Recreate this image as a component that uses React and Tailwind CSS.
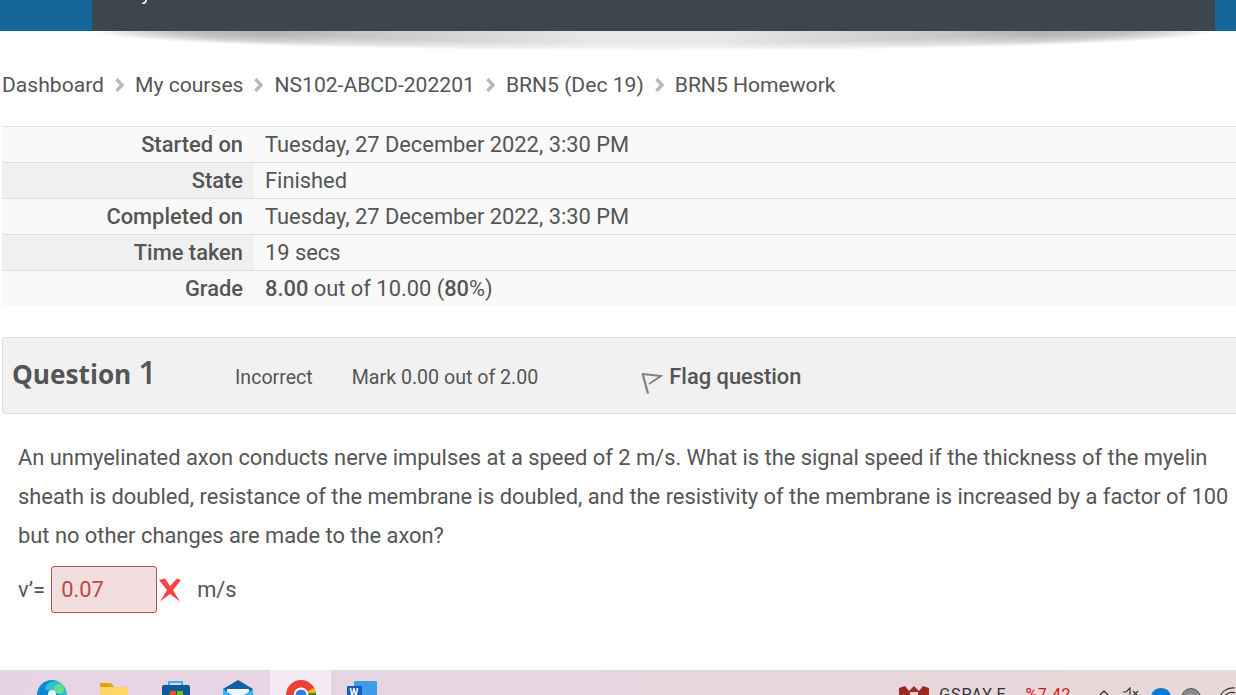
const rows = [
  ["Started on", "Tuesday, 27 December 2022, 3:30 PM"],
  ["State", "Finished"],
  ["Completed on", "Tuesday, 27 December 2022, 3:30 PM"],
  ["Time taken", "19 secs"],
];

function Chev() {
  return (
    <svg width="11" height="14" viewBox="0 0 11 14" className="mx-[10px] shrink-0" aria-hidden="true">
      <path d="M2.5 1 L8 7 L2.5 13" fill="none" stroke="#b9b9b9" strokeWidth="3.4" />
    </svg>
  );
}

function Row({ label, children, dark }) {
  return (
    <div className="flex h-[36px] border-t border-[#dedede] bg-[#f9f9f9] text-[#555555]">
      <div className={`w-[252px] shrink-0 pr-[11px] text-right font-medium leading-[35px] ${dark ? "bg-[#f0f0f0]" : ""}`}>{label}</div>
      <div className="pl-[11px] leading-[35px]">{children}</div>
    </div>
  );
}

function Taskbar() {
  return (
    <div className="relative flex h-[25px] items-start overflow-hidden bg-gradient-to-r from-[#e6d4e5] to-[#e8d8d8] pt-[11px]">
      <svg width="30" height="30" viewBox="0 0 30 30" className="ml-[37px] mt-[-1px] shrink-0">
        <circle cx="15" cy="15" r="15" fill="#2ec4c4" />
        <path d="M0 15a15 15 0 0 1 20-14c-8 0-12 4-12 9h14v8H0z" fill="#0f86d6" />
        <circle cx="22" cy="9" r="5" fill="#5fe08a" />
        <circle cx="15" cy="14" r="4" fill="#e6f4fb" />
      </svg>
      <svg width="28" height="24" viewBox="0 0 28 24" className="ml-[33px] mt-[2px] shrink-0">
        <path d="M0 0h11l3 4H0z" fill="#e2a40a" />
        <path d="M0 4h28v20H0z" fill="#fbd565" />
      </svg>
      <svg width="30" height="28" viewBox="0 0 30 28" className="ml-[33px] mt-0 shrink-0">
        <path d="M8 5V1h13v4" fill="none" stroke="#29b6ef" strokeWidth="2" />
        <rect x="1" y="4" width="28" height="24" rx="2" fill="#10589c" />
        <rect x="9" y="10" width="6" height="6" fill="#f25022" />
        <rect x="16" y="10" width="6" height="6" fill="#7fba00" />
      </svg>
      <svg width="30" height="24" viewBox="0 0 30 24" className="ml-[32px] mt-[-1px] shrink-0">
        <path d="M0 9 15 0l15 9v15H0z" fill="#0f5fa8" />
        <path d="M4 9h22v6l-11 5-11-5z" fill="#f2f7fb" />
        <path d="M0 9l15 10L30 9v15H0z" fill="#33b5f0" />
      </svg>
      <div className="ml-[17px] mt-[-11px] flex h-[25px] w-[61px] shrink-0 justify-center bg-[#f3eaf4] pt-[10px]">
        <svg width="30" height="30" viewBox="0 0 30 30">
          <circle cx="15" cy="15" r="15" fill="#e94235" />
          <path d="M15 15 28 8a15 15 0 0 1 2 7v15H15z" fill="#fbbc04" />
          <path d="M15 15 2 22a15 15 0 0 0 13 8z" fill="#34a853" />
          <path d="M12 13h18v17H12z" fill="#1e6f45" opacity="0.75" />
          <circle cx="15" cy="15" r="7.5" fill="#fff" />
          <circle cx="15" cy="15" r="5.5" fill="#2f7de1" />
        </svg>
      </div>
      <svg width="30" height="24" viewBox="0 0 30 24" className="ml-[16px] mt-0 shrink-0">
        <rect x="7" y="0" width="23" height="24" rx="1" fill="#3f9be8" />
        <rect x="0" y="5" width="15" height="19" rx="1" fill="#185abd" />
        <text x="2.5" y="15" fontSize="10" fontWeight="700" fill="#fff" fontFamily="Roboto, sans-serif">W</text>
      </svg>
      <div className="ml-auto flex items-start">
        <svg width="30" height="14" viewBox="0 0 30 14" className="mt-[5px] shrink-0">
          <path d="M0 2 6 0l4 5 5-5 5 5 4-5 6 2v12h-6V8l-4 6h-10L4 8v6H0z" fill="#9c2a20" />
          <path d="M11 6h8v8h-8z" fill="#e8c8c0" />
        </svg>
        <span className="ml-[10px] mt-[4px] font-['Roboto',sans-serif] text-[16px] leading-[20px] text-[#333333] tracking-[1px]">GSPAY.E</span>
        <span className="ml-[19px] mt-[4px] font-['Roboto',sans-serif] text-[16px] leading-[20px] text-[#d01818] tracking-[0.5px]">%7.42</span>
        <svg width="12" height="8" viewBox="0 0 12 8" className="ml-[27px] mt-[8px] shrink-0">
          <path d="M1 7 6 2l5 5" fill="none" stroke="#333" strokeWidth="1.3" />
        </svg>
        <svg width="18" height="14" viewBox="0 0 18 14" className="ml-[12px] mt-[6px] shrink-0">
          <path d="M1 5h3l4-4v13" fill="none" stroke="#333" strokeWidth="1.2" />
          <path d="M11 4l5 5M16 4l-5 5" stroke="#333" strokeWidth="1.2" />
        </svg>
        <svg width="20" height="14" viewBox="0 0 20 14" className="ml-[11px] mt-[7px] shrink-0">
          <path d="M0 8 Q2 0 10 0 Q18 0 20 8 V14 H0z" fill="#0f78d4" />
        </svg>
        <svg width="20" height="14" viewBox="0 0 20 14" className="ml-[10px] mt-[7px] shrink-0">
          <circle cx="10" cy="10" r="9.5" fill="#8a8a8a" stroke="#555" />
          <circle cx="10" cy="12" r="6" fill="#b0b0b0" />
        </svg>
        <svg width="18" height="14" viewBox="0 0 18 14" className="ml-[17px] mt-[6px] shrink-0">
          <path d="M1 13A14 14 0 0 1 17 1M5 14A9 9 0 0 1 17 6" fill="none" stroke="#333" strokeWidth="1.2" />
        </svg>
      </div>
    </div>
  );
}

export default function App() {
  return (
    <div className="relative flex h-[695px] w-[1236px] flex-col overflow-hidden bg-white font-['Roboto',sans-serif] text-[#555555]">
      <div className="h-[31px] shrink-0 bg-[#14659a] px-[92px] pr-[21px]">
        <div className="h-full overflow-hidden bg-[#3c464d] pl-[32px]">
          <span className="relative top-[-19px] text-[20px] leading-[24px] text-white">My</span>
        </div>
      </div>
      <div
        className="pointer-events-none absolute left-[92px] top-[31px] h-[20px] w-[1123px] bg-[linear-gradient(to_right,#707070,#a0a0a0_15%,#c4c4c4_22%,#e8e8e8_45%,#e8e8e8_55%,#c4c4c4_78%,#a0a0a0_85%,#707070)] [mask-image:radial-gradient(ellipse_50%_100%_at_50%_0,#000_0%,#000_60%,rgba(0,0,0,0.5)_85%,transparent_100%)]"
        aria-hidden="true"
      ></div>

      <div className="flex h-[95px] shrink-0 items-center pl-[2px] pt-[13px] text-[21.1px]">
        <span>Dashboard</span><Chev />
        <span>My courses</span><Chev />
        <span>NS102-ABCD-202201</span><Chev />
        <span>BRN5 (Dec 19)</span><Chev />
        <span>BRN5 Homework</span>
      </div>

      <div className="ml-[2px] shrink-0 text-[21.87px]">
        {rows.map(([l, v], i) => (
          <Row key={l} label={l} dark={i % 2 === 1}>{v}</Row>
        ))}
        <Row label="Grade">
          <span className="font-medium">8.00</span> out of 10.00 (<span className="font-medium">80</span>%)
        </Row>
      </div>

      <div className="ml-[2px] mt-[31px] flex h-[77px] shrink-0 items-center rounded-l-[3px] border border-r-0 border-[#dedede] bg-[#f1f1f1]">
        <div className="w-[232px] shrink-0 pb-[7px] pl-[9px] font-['Open_Sans',sans-serif] text-[26.2px] font-bold">
          Question <span className="text-[32px] font-semibold">1</span>
        </div>
        <span className="mt-[5px] text-[19.6px]">Incorrect</span>
        <span className="ml-[39px] mt-[5px] text-[19.6px]">Mark 0.00 out of 2.00</span>
        <svg width="22" height="26" viewBox="0 0 22 26" className="ml-[103px] mt-[12px] shrink-0" aria-hidden="true">
          <path d="M1.5 4.5 L7 24.5" stroke="#808080" strokeWidth="2.2" fill="none" />
          <path d="M1.5 5 L20 7 L8 15" stroke="#808080" strokeWidth="1.8" fill="none" />
        </svg>
        <span className="ml-[6px] mt-[4px] text-[21.87px] font-medium">Flag question</span>
      </div>

      <div className="shrink-0 pl-[18px] pt-[24px] text-[21.87px] leading-[39px]">
        <p className="w-[1218px]">An unmyelinated axon conducts nerve impulses at a speed of 2 m/s. What is the signal speed if the thickness of the myelin sheath is doubled, resistance of the membrane is doubled, and the resistivity of the membrane is increased by a factor of 100 but no other changes are made to the axon?</p>
        <div className="mt-[11px] flex items-center">
          <span>v’=</span>
          <div className="ml-[6px] flex h-[47px] w-[106px] items-center rounded-[3px] border border-[#b94a48] bg-[#f2dede] pl-[9px] text-[#b94a48]">0.07</div>
          <svg width="22" height="24" viewBox="0 0 22 24" className="ml-[2px] shrink-0" aria-hidden="true">
            <path d="M0 2 L6 0.5 L11 8 L18 0.5 L22 2 L14 12 L21 23.5 L11 16 L1 23.5 L8 12z" fill="#f94444" />
          </svg>
          <span className="ml-[16px]">m/s</span>
        </div>
      </div>

      <div className="mt-auto">
        <Taskbar />
      </div>
    </div>
  );
}
